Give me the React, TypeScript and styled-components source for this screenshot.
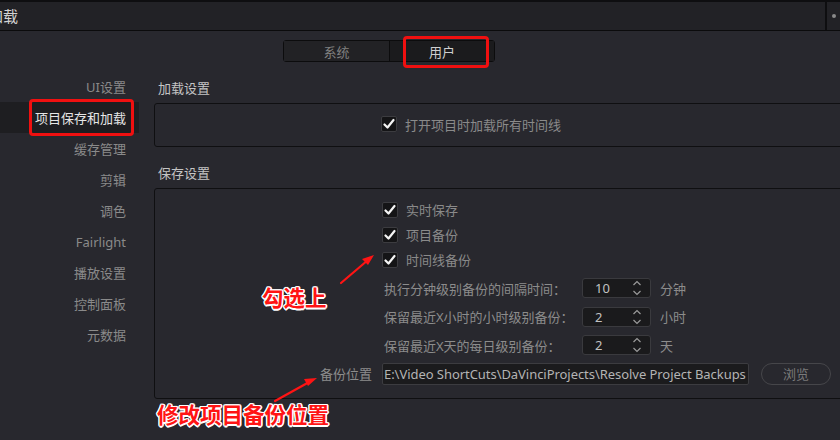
import styled, { createGlobalStyle } from 'styled-components';

const Global = createGlobalStyle`
  html, body { margin: 0; padding: 0; background: #28282e; }
  * { box-sizing: border-box; }
`;

const FONT = `'Noto Sans', 'Noto Sans CJK SC', sans-serif`;

const Window = styled.div`
  position: relative;
  width: 840px;
  height: 440px;
  overflow: hidden;
  background: #28282e;
  font-family: ${FONT};
  font-size: 13px;
`;

const TitleBar = styled.div`
  display: flex;
  align-items: center;
  height: 31px;
  border-top: 2px solid #0e0e10;
  border-bottom: 1px solid #0b0b0c;
  background: #222226;
`;

const Title = styled.div`
  flex: 1;
  margin-left: -12px;
  font-size: 15px;
  color: #d2d2d2;
  line-height: 28px;
`;

const TitleSide = styled.div`
  width: 15px;
  height: 100%;
  border-left: 2px solid #0e0e10;
  display: flex;
  align-items: center;
  justify-content: center;
  &::after {
    content: '';
    width: 4px;
    height: 4px;
    border-radius: 50%;
    background: #8a8a8a;
  }
`;

const TabRow = styled.div`
  display: flex;
  padding: 9px 0 0 283px;
  height: 40px;
`;

const Segment = styled.div`
  display: flex;
  height: 22px;
  border: 1px solid #0c0c0d;
  border-radius: 3px;
  overflow: visible;
`;

const Tab = styled.div<{ $active?: boolean }>`
  position: relative;
  width: 105px;
  display: flex;
  align-items: center;
  justify-content: center;
  background: ${(p) => (p.$active ? '#1b1b1d' : '#222225')};
  color: ${(p) => (p.$active ? '#cfcfcf' : '#808080')};
  font-size: 13px;
  & + & { border-left: 1px solid #0c0c0d; }
`;

const RedBox = styled.span<{ $l: number; $t: number; $w: number; $h: number }>`
  position: absolute;
  left: ${(p) => p.$l}px;
  top: ${(p) => p.$t}px;
  width: ${(p) => p.$w}px;
  height: ${(p) => p.$h}px;
  border: 3px solid #f01010;
  border-radius: 4px;
  pointer-events: none;
`;

const Body = styled.div`
  display: grid;
  grid-template-columns: 139px 1fr;
  column-gap: 15px;
`;

const Sidebar = styled.div`
  display: flex;
  flex-direction: column;
`;

const NavItem = styled.div<{ $active?: boolean }>`
  position: relative;
  height: 31px;
  display: flex;
  align-items: center;
  justify-content: flex-end;
  padding-right: 13px;
  background: ${(p) => (p.$active ? '#1e1e21' : 'transparent')};
  color: ${(p) => (p.$active ? '#e6e6e6' : '#8a8a8a')};
  font-size: 13px;
`;

const Content = styled.div`
  display: flex;
  flex-direction: column;
`;

const SectionTitle = styled.div<{ $gap?: number }>`
  height: 32px;
  margin-top: ${(p) => p.$gap ?? 0}px;
  padding-left: 4px;
  display: flex;
  align-items: center;
  color: #c4c4c4;
  font-size: 13px;
`;

const Panel = styled.div<{ $h: number }>`
  height: ${(p) => p.$h}px;
  margin-right: -10px;
  border: 1px solid #0f0f11;
  border-radius: 3px;
`;

const LoadPanel = styled(Panel)`
  display: flex;
  align-items: center;
  padding-left: 226px;
  padding-bottom: 2px;
`;

const SaveGrid = styled.div`
  display: grid;
  grid-template-columns: 217px 1fr;
  column-gap: 10px;
  padding-top: 8px;
`;

const Field = styled.div<{ $h: number }>`
  grid-column: 2;
  height: ${(p) => p.$h}px;
  display: flex;
  align-items: center;
`;

const RowLabel = styled.div`
  grid-column: 1;
  display: flex;
  align-items: center;
  justify-content: flex-end;
  color: #8c8c8c;
`;

const Check = styled.label`
  display: flex;
  align-items: center;
  gap: 8px;
  color: #8a8a8a;
`;

const Box = styled.span`
  width: 16px;
  height: 16px;
  border: 1px solid #3c3c40;
  border-radius: 2px;
  background: #141416;
  display: flex;
  align-items: center;
  justify-content: center;
`;

const SpinLabel = styled.div`
  width: 198px;
  color: #8c8c8c;
  margin-left: 2px;
`;

const Spin = styled.div`
  width: 69px;
  height: 20px;
  border: 1px solid #3a3a3e;
  border-radius: 3px;
  background: #1a1a1c;
  display: flex;
  align-items: center;
  justify-content: space-between;
  padding: 0 8px 0 12px;
  color: #c2c2c2;
  font-size: 13px;
`;

const Unit = styled.span`
  margin-left: 9px;
  color: #8c8c8c;
`;

const PathInput = styled.div`
  width: 367px;
  height: 22px;
  border: 1px solid #3c3c40;
  border-radius: 2px;
  background: #1b1b1d;
  color: #b4b4b4;
  font-size: 13px;
  display: flex;
  align-items: center;
  padding-left: 1px;
  white-space: nowrap;
  overflow: hidden;
  letter-spacing: -0.05px;
`;

const Browse = styled.button`
  margin-left: 12px;
  width: 70px;
  height: 22px;
  border: 1px solid #46464a;
  border-radius: 11px;
  background: transparent;
  color: #7a7a7a;
  font-family: ${FONT};
  font-size: 13px;
  padding: 0;
`;

const Note = styled.div<{ $l: number; $t: number }>`
  position: absolute;
  left: ${(p) => p.$l}px;
  top: ${(p) => p.$t}px;
  color: #ff1414;
  font-family: 'Noto Sans CJK SC', sans-serif;
  font-weight: 700;
  font-size: 21.5px;
  line-height: 26px;
  white-space: nowrap;
  text-shadow:
    1.5px 0 0 #fff, -1.5px 0 0 #fff, 0 1.5px 0 #fff, 0 -1.5px 0 #fff,
    1px 1px 0 #fff, -1px -1px 0 #fff, 1px -1px 0 #fff, -1px 1px 0 #fff;
`;

const Overlay = styled.svg`
  position: absolute;
  left: 0;
  top: 0;
  pointer-events: none;
`;

const Tick = () => (
  <svg width='12' height='12' viewBox='0 0 12 12'>
    <path d='M1.5 6.5 L4.5 9.5 L10.5 2' fill='none' stroke='#f4f4f4' strokeWidth='2.2' strokeLinecap='round' strokeLinejoin='round' />
  </svg>
);

const Arrows = () => (
  <svg width='10' height='16' viewBox='0 0 10 16'>
    <path d='M1.5 5 L5 1.5 L8.5 5 M1.5 11 L5 14.5 L8.5 11' fill='none' stroke='#9a9a9a' strokeWidth='1.2' />
  </svg>
);

const CheckRow = ({ label }: { label: string }) => (
  <Field $h={25}>
    <Check>
      <Box>
        <Tick />
      </Box>
      {label}
    </Check>
  </Field>
);

const SpinRow = ({ label, value, unit }: { label: string; value: string; unit: string }) => (
  <Field $h={28.5}>
    <SpinLabel>{label}</SpinLabel>
    <Spin>
      {value}
      <Arrows />
    </Spin>
    <Unit>{unit}</Unit>
  </Field>
);

const nav = ['UI设置', '项目保存和加载', '缓存管理', '剪辑', '调色', 'Fairlight', '播放设置', '控制面板', '元数据'];

export default function App() {
  return (
    <Window>
      <Global />
      <TitleBar>
        <Title>加载</Title>
        <TitleSide />
      </TitleBar>
      <TabRow>
        <Segment>
          <Tab>系统</Tab>
          <Tab $active>
            用户
            <RedBox $l={13} $t={-5} $w={86} $h={32} />
          </Tab>
        </Segment>
      </TabRow>
      <Body>
        <Sidebar>
          {nav.map((n, i) => (
            <NavItem key={n} $active={i === 1}>
              {n}
              {i === 1 && <RedBox $l={29} $t={-3} $w={105} $h={37} />}
            </NavItem>
          ))}
        </Sidebar>
        <Content>
          <SectionTitle>加载设置</SectionTitle>
          <LoadPanel $h={44}>
            <Check>
              <Box>
                <Tick />
              </Box>
              打开项目时加载所有时间线
            </Check>
          </LoadPanel>
          <SectionTitle $gap={9}>保存设置</SectionTitle>
          <Panel $h={211}>
            <SaveGrid>
              <CheckRow label='实时保存' />
              <CheckRow label='项目备份' />
              <CheckRow label='时间线备份' />
              <Field $h={2} />
              <SpinRow label='执行分钟级别备份的间隔时间：' value='10' unit='分钟' />
              <SpinRow label='保留最近X小时的小时级别备份：' value='2' unit='小时' />
              <SpinRow label='保留最近X天的每日级别备份：' value='2' unit='天' />
              <RowLabel>备份位置</RowLabel>
              <Field $h={28}>
                <PathInput>E:\Video ShortCuts\DaVinciProjects\Resolve Project Backups</PathInput>
                <Browse>浏览</Browse>
              </Field>
            </SaveGrid>
          </Panel>
        </Content>
      </Body>
      <Overlay width='840' height='440'>
        <g stroke='#ff1414' strokeWidth='2.2' fill='#ff1414' strokeLinecap='round'>
          <line x1='341' y1='283' x2='368' y2='260' />
          <path d='M374 255 L362 259 L368 265 Z' stroke='none' />
          <line x1='275' y1='401' x2='311' y2='381' />
          <path d='M317 378 L304 379 L308 386 Z' stroke='none' />
        </g>
      </Overlay>
      <Note $l={262} $t={284}>勾选上</Note>
      <Note $l={157} $t={401}>修改项目备份位置</Note>
    </Window>
  );
}
